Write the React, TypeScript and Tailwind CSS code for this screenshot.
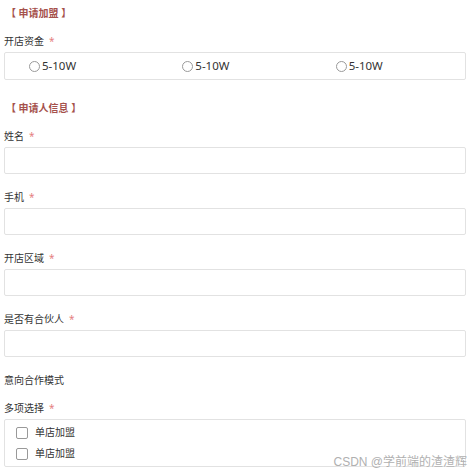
import React from "react";

const font = { fontFamily: '"Noto Sans", "Noto Sans CJK SC", sans-serif' };

function Label({ text, required = true, className = "" }: { text: string; required?: boolean; className?: string }) {
  return (
    <div className={`h-[20px] leading-[20px] text-[10px] text-[#333] flex items-center ${className}`}>
      <span>{text}</span>
      {required && <span className="ml-[5px] text-[#e57f7f] text-[10px] leading-none">*</span>}
    </div>
  );
}

function Heading({ text, className = "" }: { text: string; className?: string }) {
  return (
    <div className={`h-[20px] leading-[20px] text-[10px] font-bold text-[#a5514c] pl-[2px] ${className}`}>{text}</div>
  );
}

function Input() {
  return <div className="mt-[1px] h-[27px] border border-[#e2e2e2] rounded-[2px] bg-white" />;
}

function Radio() {
  return (
    <div className="flex items-center pl-[24px]">
      <span className="w-[11px] h-[11px] rounded-full border border-[#9a9a9a] bg-white" />
      <span className="ml-[2px] text-[11.5px] text-[#333] leading-none">5-10W</span>
    </div>
  );
}

function Check({ text }: { text: string }) {
  return (
    <div className="h-[21px] flex items-center pl-[11px]">
      <span className="w-[12px] h-[12px] border border-[#999] rounded-[2px] bg-white" />
      <span className="ml-[7px] text-[10px] text-[#333]">{text}</span>
    </div>
  );
}

export default function App() {
  return (
    <div className="relative w-[474px] h-[474px] overflow-hidden bg-white pl-[4px] pr-[8px] pt-[3px]" style={font}>
      <Heading text="【 申请加盟 】" />
      <Label text="开店资金" className="mt-[8px]" />
      <div className="mt-[1px] h-[28px] border border-[#e2e2e2] rounded-[2px] grid grid-cols-3 items-center">
        <Radio />
        <Radio />
        <Radio />
      </div>
      <Heading text="【 申请人信息 】" className="mt-[18px]" />
      <Label text="姓名" className="mt-[8px]" />
      <Input />
      <Label text="手机" className="mt-[13px]" />
      <Input />
      <Label text="开店区域" className="mt-[13px]" />
      <Input />
      <Label text="是否有合伙人" className="mt-[13px]" />
      <Input />
      <Label text="意向合作模式" required={false} className="mt-[13px]" />
      <Label text="多项选择" className="mt-[8px]" />
      <div className="mt-[1px] border border-[#e2e2e2] rounded-[2px] py-[2px]">
        <Check text="单店加盟" />
        <Check text="单店加盟" />
      </div>
      <div
        className="absolute right-[7px] bottom-[5px] text-[12px] leading-[14px] text-[#b0b0b0]"
        style={{ fontFamily: '"Liberation Sans", "Noto Sans CJK SC", sans-serif', textShadow: "0 0 1px #fff" }}
      >
        CSDN @学前端的渣渣辉
      </div>
    </div>
  );
}
